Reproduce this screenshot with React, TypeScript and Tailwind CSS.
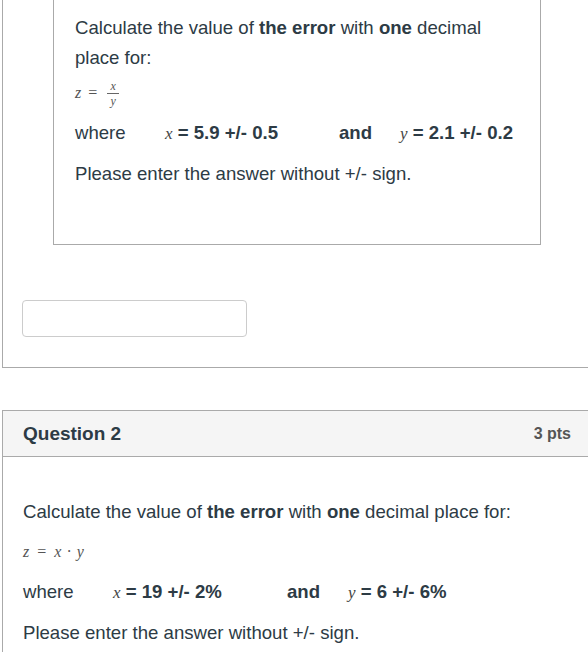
// @ts-nocheck
import React from 'react';

const Fraction = () => (
  <span className="inline-flex flex-col items-center mx-[3px] text-[12px] leading-[12px]">
    <span>x</span>
    <span className="block w-[12px] h-px bg-[#666] my-[1px]"></span>
    <span>y</span>
  </span>
);

const WhereRow = ({ x, y }) => (
  <p className="mb-[10px] flex items-baseline">
    <span className="w-[90px]">where</span>
    <span className="w-[174px] font-bold">
      <i className="font-['Liberation_Serif',serif] font-normal text-[17px] text-[#444]">x</i> = {x}
    </span>
    <span className="w-[61px] font-bold">and</span>
    <span className="font-bold">
      <i className="font-['Liberation_Serif',serif] font-normal text-[17px] text-[#444]">y</i> = {y}
    </span>
  </p>
);

const App = () => {
  return (
    <div className="w-[588px] h-[652px] overflow-hidden bg-white text-[#2d3b45] font-['Liberation_Sans',Arial,sans-serif] text-[18.6px] leading-[30px]">
      {/* question 1 (scrolled, top cut off) */}
      <div className="ml-[2px] w-[640px] border-l border-b border-[#aaa] px-[19px] pb-[30px]">
        <div className="ml-[31px] w-[488px] border-l border-r border-b border-[#aaa] pl-[21px] pr-[20px] pt-[13px] pb-[55px]">
          <p className="mb-[5px]">
            Calculate the value of <b>the error</b> with <b>one</b> decimal place for:
          </p>
          <p className="mb-[10px] h-[30px] flex items-center font-['Liberation_Serif',serif] italic text-[16px] text-[#555]">
            <span>z</span>
            <span className="not-italic mx-[7px]">=</span>
            <Fraction />
          </p>
          <WhereRow x="5.9 +/- 0.5" y="2.1 +/- 0.2" />
          <p>Please enter the answer without +/- sign.</p>
        </div>
        <div className="mt-[55px]">
          <input
            type="text"
            className="w-[225px] h-[37px] border border-[#ccc] rounded-[4px] px-2 outline-none"
          />
        </div>
      </div>

      {/* question 2 */}
      <div className="ml-[2px] mt-[42px] w-[640px] h-[400px] border-l border-t border-[#aaa]">
        <div className="h-[46px] bg-[#f5f5f5] border-b border-[#aaa] flex items-center pl-[20px] w-[586px] pr-[18px] justify-between">
          <span className="font-bold text-[19px] text-[#2d3b45]">Question 2</span>
          <span className="font-bold text-[16px] text-[#555]">3 pts</span>
        </div>
        <div className="pl-[20px] pt-[40px]">
          <p className="mb-[10px]">
            Calculate the value of <b>the error</b> with <b>one</b> decimal place for:
          </p>
          <p className="mb-[10px] h-[30px] flex items-center font-['Liberation_Serif',serif] italic text-[16px] text-[#555]">
            <span>z</span>
            <span className="not-italic mx-[8px]">=</span>
            <span>x</span>
            <span className="not-italic mx-[5px]">·</span>
            <span>y</span>
          </p>
          <WhereRow x="19 +/- 2%" y="6 +/- 6%" />
          <p>Please enter the answer without +/- sign.</p>
        </div>
      </div>
    </div>
  );
};

export default App;
